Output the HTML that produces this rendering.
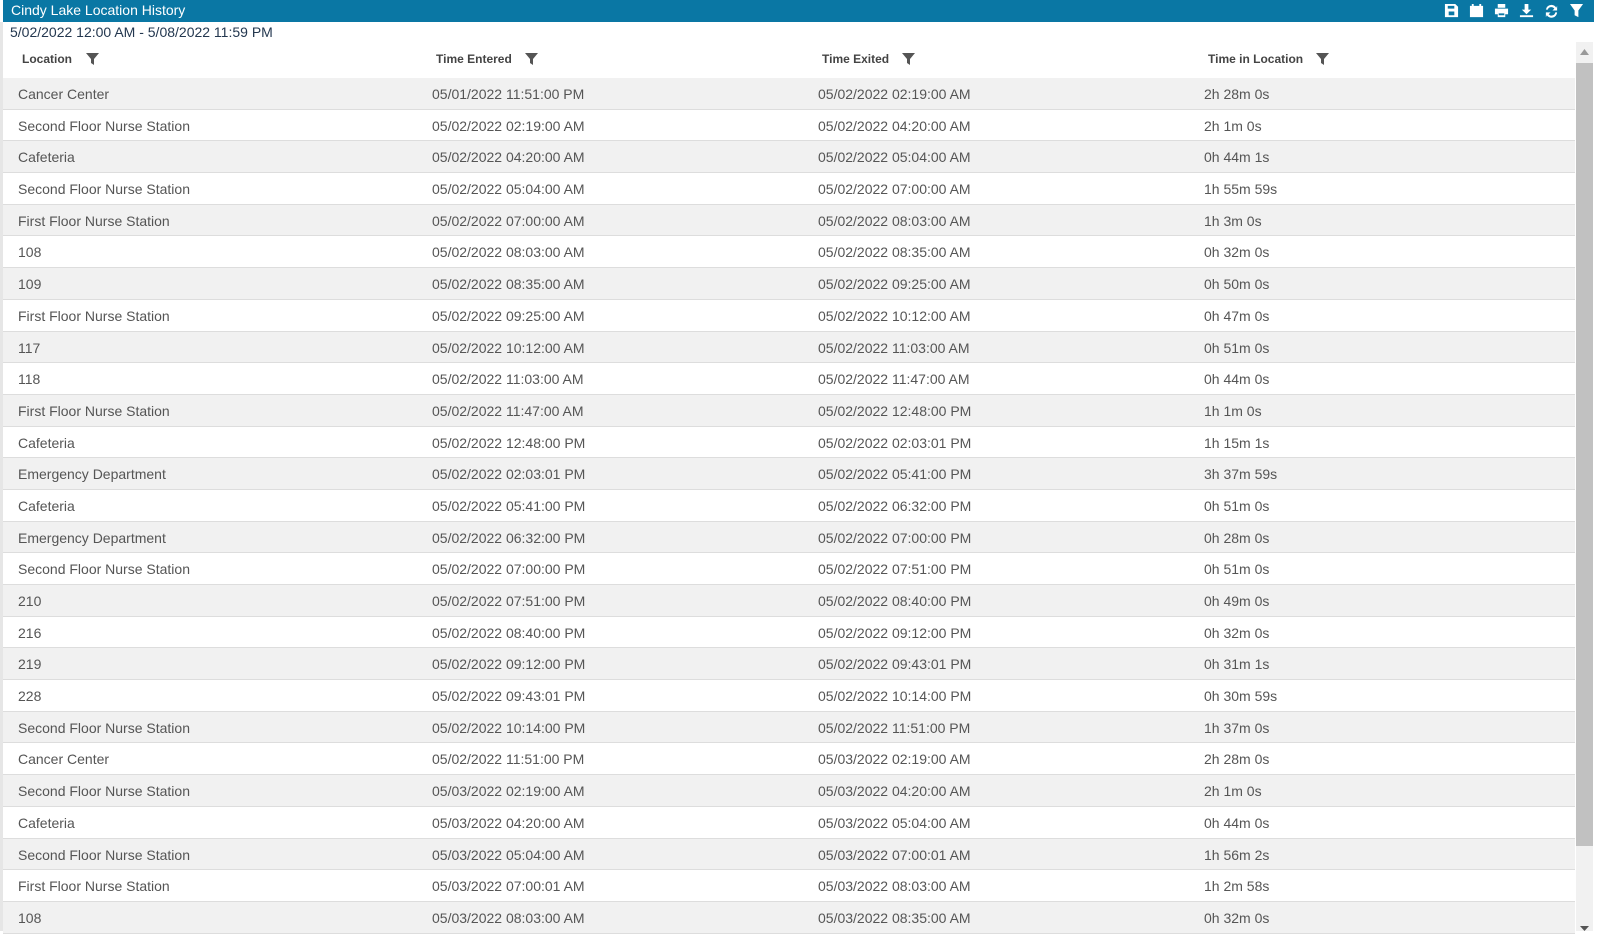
<!DOCTYPE html>
<html><head><meta charset="utf-8"><style>
*{margin:0;padding:0;box-sizing:border-box}
html,body{width:1600px;height:931px;overflow:hidden;background:#fff;font-family:"Liberation Sans",sans-serif}
.bar{position:absolute;left:3px;top:0;width:1591px;height:22px;background:#0a77a4;color:#fff;font-size:14px;line-height:21px;padding-left:8px}
.icons{position:absolute;right:10px;top:3px;display:flex;gap:10px}
.icons svg{width:15px;height:15px;fill:#fff}
.date{position:absolute;left:10px;top:24px;font-size:14px;color:#23374f}
.hdr{position:absolute;top:52px;font-size:12px;font-weight:bold;color:#444}
.f{position:absolute;top:53px;width:13px;height:12px}
.rows{position:absolute;left:3px;top:78px;width:1572px}
.r{height:31.7px;border-bottom:1.5px solid #ddd;position:relative;font-size:14px;color:#555}
.r:nth-child(odd){background:#f1f1f1}
.r span{position:absolute;top:8px}
.c1{left:15px}.c2{left:429px}.c3{left:815px}.c4{left:1201px}
.sb{position:absolute;left:1576px;top:42px;width:17px;height:889px;background:#f1f1f1}
.th{position:absolute;left:1576px;top:63px;width:17px;height:783px;background:#c1c1c1}
</style></head><body>
<div class="bar">Cindy Lake Location History
<div class="icons">
<svg viewBox="0 0 16 16"><path d="M2 1h10l3 3v11H1V1zm2 2v3h7V3zm1 6v4h6V9z"/></svg>
<svg viewBox="0 0 16 16"><path d="M3 1h2v2h6V1h2v2h2v12H1V3h2z"/></svg>
<svg viewBox="0 0 16 16"><path d="M4 1h8v4H4zM1 6h14v6h-3v3H4v-3H1zm4 5v2h6v-2z"/></svg>
<svg viewBox="0 0 16 16"><path d="M6 1h4v6h3l-5 5-5-5h3zM1 13h14v2H1z"/></svg>
<svg viewBox="0 0 16 16"><path d="M8 2a6 6 0 0 1 5 3l1-2v5h-5l2-2a4 4 0 0 0-7 1H2a6 6 0 0 1 6-5zm6 8a6 6 0 0 1-11 3l-1 2v-5h5l-2 2a4 4 0 0 0 7-2z"/></svg>
<svg viewBox="0 0 16 16"><path d="M1 1h14L10 8v7l-4-2V8z"/></svg>
</div></div>
<div class="date">5/02/2022 12:00 AM - 5/08/2022 11:59 PM</div>
<div class="hdr" style="left:22px">Location</div>
<svg class="f" style="left:86px" viewBox="0 0 13 12"><path d="M0 0h13L8 6v6L5 10V6z" fill="#555"/></svg>
<div class="hdr" style="left:436px">Time Entered</div>
<svg class="f" style="left:525px" viewBox="0 0 13 12"><path d="M0 0h13L8 6v6L5 10V6z" fill="#555"/></svg>
<div class="hdr" style="left:822px">Time Exited</div>
<svg class="f" style="left:902px" viewBox="0 0 13 12"><path d="M0 0h13L8 6v6L5 10V6z" fill="#555"/></svg>
<div class="hdr" style="left:1208px">Time in Location</div>
<svg class="f" style="left:1316px" viewBox="0 0 13 12"><path d="M0 0h13L8 6v6L5 10V6z" fill="#555"/></svg>
<div class="rows">
<div class="r"><span class="c1">Cancer Center</span><span class="c2">05/01/2022 11:51:00 PM</span><span class="c3">05/02/2022 02:19:00 AM</span><span class="c4">2h 28m 0s</span></div>
<div class="r"><span class="c1">Second Floor Nurse Station</span><span class="c2">05/02/2022 02:19:00 AM</span><span class="c3">05/02/2022 04:20:00 AM</span><span class="c4">2h 1m 0s</span></div>
<div class="r"><span class="c1">Cafeteria</span><span class="c2">05/02/2022 04:20:00 AM</span><span class="c3">05/02/2022 05:04:00 AM</span><span class="c4">0h 44m 1s</span></div>
<div class="r"><span class="c1">Second Floor Nurse Station</span><span class="c2">05/02/2022 05:04:00 AM</span><span class="c3">05/02/2022 07:00:00 AM</span><span class="c4">1h 55m 59s</span></div>
<div class="r"><span class="c1">First Floor Nurse Station</span><span class="c2">05/02/2022 07:00:00 AM</span><span class="c3">05/02/2022 08:03:00 AM</span><span class="c4">1h 3m 0s</span></div>
<div class="r"><span class="c1">108</span><span class="c2">05/02/2022 08:03:00 AM</span><span class="c3">05/02/2022 08:35:00 AM</span><span class="c4">0h 32m 0s</span></div>
<div class="r"><span class="c1">109</span><span class="c2">05/02/2022 08:35:00 AM</span><span class="c3">05/02/2022 09:25:00 AM</span><span class="c4">0h 50m 0s</span></div>
<div class="r"><span class="c1">First Floor Nurse Station</span><span class="c2">05/02/2022 09:25:00 AM</span><span class="c3">05/02/2022 10:12:00 AM</span><span class="c4">0h 47m 0s</span></div>
<div class="r"><span class="c1">117</span><span class="c2">05/02/2022 10:12:00 AM</span><span class="c3">05/02/2022 11:03:00 AM</span><span class="c4">0h 51m 0s</span></div>
<div class="r"><span class="c1">118</span><span class="c2">05/02/2022 11:03:00 AM</span><span class="c3">05/02/2022 11:47:00 AM</span><span class="c4">0h 44m 0s</span></div>
<div class="r"><span class="c1">First Floor Nurse Station</span><span class="c2">05/02/2022 11:47:00 AM</span><span class="c3">05/02/2022 12:48:00 PM</span><span class="c4">1h 1m 0s</span></div>
<div class="r"><span class="c1">Cafeteria</span><span class="c2">05/02/2022 12:48:00 PM</span><span class="c3">05/02/2022 02:03:01 PM</span><span class="c4">1h 15m 1s</span></div>
<div class="r"><span class="c1">Emergency Department</span><span class="c2">05/02/2022 02:03:01 PM</span><span class="c3">05/02/2022 05:41:00 PM</span><span class="c4">3h 37m 59s</span></div>
<div class="r"><span class="c1">Cafeteria</span><span class="c2">05/02/2022 05:41:00 PM</span><span class="c3">05/02/2022 06:32:00 PM</span><span class="c4">0h 51m 0s</span></div>
<div class="r"><span class="c1">Emergency Department</span><span class="c2">05/02/2022 06:32:00 PM</span><span class="c3">05/02/2022 07:00:00 PM</span><span class="c4">0h 28m 0s</span></div>
<div class="r"><span class="c1">Second Floor Nurse Station</span><span class="c2">05/02/2022 07:00:00 PM</span><span class="c3">05/02/2022 07:51:00 PM</span><span class="c4">0h 51m 0s</span></div>
<div class="r"><span class="c1">210</span><span class="c2">05/02/2022 07:51:00 PM</span><span class="c3">05/02/2022 08:40:00 PM</span><span class="c4">0h 49m 0s</span></div>
<div class="r"><span class="c1">216</span><span class="c2">05/02/2022 08:40:00 PM</span><span class="c3">05/02/2022 09:12:00 PM</span><span class="c4">0h 32m 0s</span></div>
<div class="r"><span class="c1">219</span><span class="c2">05/02/2022 09:12:00 PM</span><span class="c3">05/02/2022 09:43:01 PM</span><span class="c4">0h 31m 1s</span></div>
<div class="r"><span class="c1">228</span><span class="c2">05/02/2022 09:43:01 PM</span><span class="c3">05/02/2022 10:14:00 PM</span><span class="c4">0h 30m 59s</span></div>
<div class="r"><span class="c1">Second Floor Nurse Station</span><span class="c2">05/02/2022 10:14:00 PM</span><span class="c3">05/02/2022 11:51:00 PM</span><span class="c4">1h 37m 0s</span></div>
<div class="r"><span class="c1">Cancer Center</span><span class="c2">05/02/2022 11:51:00 PM</span><span class="c3">05/03/2022 02:19:00 AM</span><span class="c4">2h 28m 0s</span></div>
<div class="r"><span class="c1">Second Floor Nurse Station</span><span class="c2">05/03/2022 02:19:00 AM</span><span class="c3">05/03/2022 04:20:00 AM</span><span class="c4">2h 1m 0s</span></div>
<div class="r"><span class="c1">Cafeteria</span><span class="c2">05/03/2022 04:20:00 AM</span><span class="c3">05/03/2022 05:04:00 AM</span><span class="c4">0h 44m 0s</span></div>
<div class="r"><span class="c1">Second Floor Nurse Station</span><span class="c2">05/03/2022 05:04:00 AM</span><span class="c3">05/03/2022 07:00:01 AM</span><span class="c4">1h 56m 2s</span></div>
<div class="r"><span class="c1">First Floor Nurse Station</span><span class="c2">05/03/2022 07:00:01 AM</span><span class="c3">05/03/2022 08:03:00 AM</span><span class="c4">1h 2m 58s</span></div>
<div class="r"><span class="c1">108</span><span class="c2">05/03/2022 08:03:00 AM</span><span class="c3">05/03/2022 08:35:00 AM</span><span class="c4">0h 32m 0s</span></div>
</div>
<div class="sb"></div><div class="th"></div>
<svg style="position:absolute;left:1580px;top:49px" width="9" height="6"><path d="M0 6L4.5 0 9 6z" fill="#999"/></svg>
<svg style="position:absolute;left:1580px;top:926px" width="9" height="5"><path d="M0 0h9L4.5 5z" fill="#555"/></svg>
<div style="position:absolute;left:0;top:22px;width:3px;height:909px;background:#e6e6e6"></div>
</body></html>
